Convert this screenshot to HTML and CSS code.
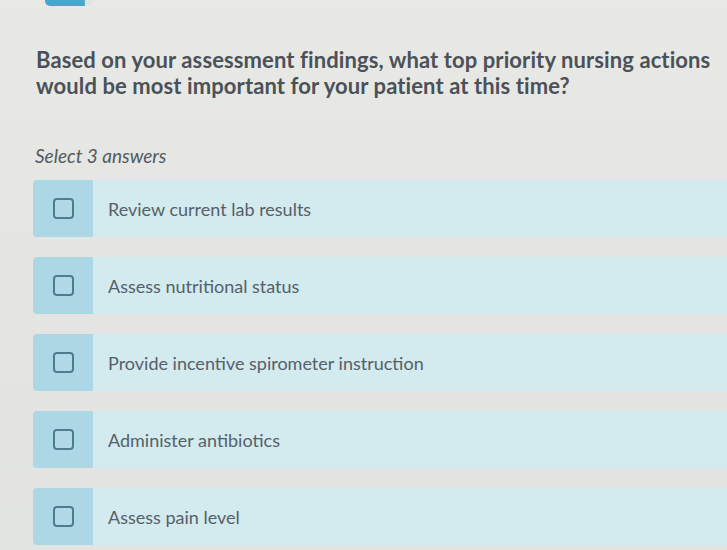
FILE: index.html
```html
<!DOCTYPE html>
<html>
<head>
<meta charset="utf-8">
<link rel="stylesheet" href="styles.css">
</head>
<body>
<div class="page">
  <div class="topbar"><span class="tab"></span></div>
  <h1 class="question">Based on your assessment findings, what top priority nursing actions would be most important for your patient at this time?</h1>
  <p class="hint">Select 3 answers</p>
  <ul class="options">
    <li class="option"><span class="side"><span class="box"></span></span><span class="label">Review current lab results</span></li>
    <li class="option"><span class="side"><span class="box"></span></span><span class="label">Assess nutritional status</span></li>
    <li class="option"><span class="side"><span class="box"></span></span><span class="label">Provide incentive spirometer instruction</span></li>
    <li class="option"><span class="side"><span class="box"></span></span><span class="label">Administer antibiotics</span></li>
    <li class="option"><span class="side"><span class="box"></span></span><span class="label">Assess pain level</span></li>
  </ul>
</div>
</body>
</html>
```
FILE: styles.css
```css
html, body {
  margin: 0;
  padding: 0;
  background: #e5e5e2;
  overflow: hidden;
}
.page {
  width: 727px;
  height: 550px;
  font-family: Lato, "Open Sans", sans-serif;
  color: #4e555c;
  background: linear-gradient(180deg, #e8e8e5 0%, #e4e5e2 60%, #e2e4e1 100%);
}
.topbar {
  height: 6px;
  padding-left: 45px;
}
.tab {
  display: block;
  width: 48px;
  height: 6px;
  border-radius: 0 0 5px 5px;
  background: linear-gradient(90deg, #4aa5cc 0%, #4aa5cc 82%, #dfe3e4 84%);
}
.question {
  margin: 41px 0 0 36px;
  width: 690px;
  font-size: 22px;
  line-height: 26px;
  font-weight: 700;
  letter-spacing: 0.1px;
  color: #4b5158;
}
.hint {
  margin: 46px 0 0 35px;
  font-size: 19px;
  line-height: 22px;
  font-style: italic;
  color: #535a61;
}
.options {
  list-style: none;
  margin: 13px 0 0 33px;
  padding: 0;
  display: flex;
  flex-direction: column;
  gap: 20px;
}
.option {
  display: flex;
  align-items: center;
  height: 57px;
  background: #d3eaee;
  border-radius: 4px 0 0 4px;
}
.side {
  display: flex;
  align-items: center;
  justify-content: center;
  width: 60px;
  height: 100%;
  background: #acd7e5;
  border-radius: 4px 0 0 4px;
}
.box {
  width: 17px;
  height: 17px;
  border: 2.5px solid #4f7b8e;
  border-radius: 4px;
  background: #b2dae6;
}
.label {
  margin-left: 15px;
  font-size: 18px;
  color: #56606a;
}
```
